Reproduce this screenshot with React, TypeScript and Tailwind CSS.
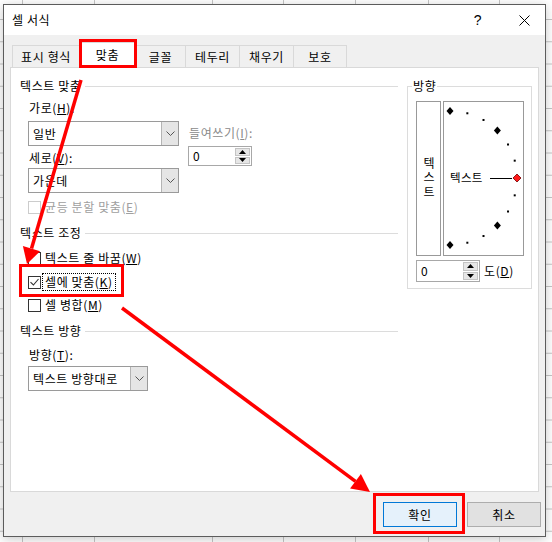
import React from "react";

const U = ({ children }: { children: React.ReactNode }) => (
  <span className="underline underline-offset-[1px]">{children}</span>
);

function GridBackground() {
  const cols = [22.5, 94.5, 212.5, 283.5, 355.5, 428.5, 499.5];
  const rows = Array.from({ length: 25 }, (_, i) => 19.5 + i * 22.25);
  return (
    <svg className="absolute inset-0" width="552" height="542">
      {cols.map((x) => (
        <line key={x} x1={x} y1="0" x2={x} y2="542" stroke="#c6c6c6" strokeWidth="1" />
      ))}
      {rows.map((y) => (
        <line key={y} x1="0" y1={y} x2="552" y2={y} stroke="#c6c6c6" strokeWidth="1" />
      ))}
    </svg>
  );
}

function Chevron() {
  return (
    <svg width="9" height="5" viewBox="0 0 9 5">
      <polyline points="0.5,0.5 4.5,4.5 8.5,0.5" fill="none" stroke="#555" strokeWidth="1" />
    </svg>
  );
}

function Select({ value, className }: { value: string; className: string }) {
  return (
    <div className={`flex h-[25px] border border-[#9a9a9a] bg-white ${className}`}>
      <span className="flex-1 pl-[4px] flex items-center leading-[16px]">{value}</span>
      <div className="w-[17px] bg-[#e5e5e5] border-l border-[#b4b4b4] flex items-center justify-center">
        <Chevron />
      </div>
    </div>
  );
}

function Tri({ down }: { down?: boolean }) {
  return (
    <svg width="7" height="4" viewBox="0 0 7 4">
      {down ? <polygon points="0,0 7,0 3.5,4" fill="#000" /> : <polygon points="0,4 7,4 3.5,0" fill="#000" />}
    </svg>
  );
}

function Spin({ className }: { className: string }) {
  return (
    <div className={`flex w-[64px] border border-[#a8a8a8] bg-white ${className}`}>
      <span className="flex-1 pl-[4px] flex items-center leading-[16px]">0</span>
      <div className="w-[15px] my-px mr-px flex flex-col gap-px">
        <div className="flex-1 bg-[#e6e6e6] border border-[#c4c4c4] flex items-center justify-center">
          <Tri />
        </div>
        <div className="flex-1 bg-[#e6e6e6] border border-[#c4c4c4] flex items-center justify-center">
          <Tri down />
        </div>
      </div>
    </div>
  );
}

function Check({ checked, disabled }: { checked?: boolean; disabled?: boolean }) {
  return (
    <span
      className={`w-[13px] h-[13px] shrink-0 border bg-white flex items-center justify-center ${
        disabled ? "border-[#cccccc]" : "border-[#333333]"
      }`}
    >
      {checked && (
        <svg width="9" height="8" viewBox="0 0 9 8">
          <path d="M0.5 4.2 L3.4 7 L8.5 1" fill="none" stroke="#333" strokeWidth="1.1" />
        </svg>
      )}
    </span>
  );
}

function GroupHeader({ children }: { children: React.ReactNode }) {
  return (
    <div className="flex items-center h-[16px]">
      <span className="leading-[16px]">{children}</span>
      <div className="flex-1 h-px bg-[#dcdcdc] ml-[3px]" />
    </div>
  );
}

function Tabs() {
  const tab = "mt-[3px] h-[22px] -ml-px border border-b-0 border-[#d9d9d9] bg-[#f0f0f0] flex items-center justify-center leading-[16px]";
  return (
    <div className="flex items-start h-[25px] ml-[2px]">
      <div className="mt-[3px] h-[22px] w-[68px] border border-b-0 border-[#d9d9d9] bg-[#f0f0f0] flex items-center justify-center leading-[16px]">
        표시 형식
      </div>
      <div className="relative z-10 h-[26px] w-[57px] -ml-px border border-b-0 border-[#d9d9d9] bg-white flex items-center justify-center leading-[16px] pb-[1px]">
        맞춤
      </div>
      <div className={`${tab} w-[51px]`}>글꼴</div>
      <div className={`${tab} w-[55px]`}>테두리</div>
      <div className={`${tab} w-[55px]`}>채우기</div>
      <div className={`${tab} w-[54px]`}>보호</div>
    </div>
  );
}

function Orientation() {
  const r = 67;
  const cx = 6;
  const cy = 76;
  const pts = [90, 75, 60, 45, 30, 15, 0, -15, -30, -45, -60, -75, -90].map((a) => ({
    a,
    x: cx + r * Math.cos((a * Math.PI) / 180),
    y: cy - r * Math.sin((a * Math.PI) / 180),
  }));
  return (
    <div className="relative w-[81px] h-[155px] border border-[#999999]">
      <svg className="absolute inset-0" width="79" height="153">
        {pts.map((p) => {
          if (p.a === 0)
            return (
              <polygon
                key={p.a}
                points={`${p.x},${p.y - 4} ${p.x + 4},${p.y} ${p.x},${p.y + 4} ${p.x - 4},${p.y}`}
                fill="#ff1a1a"
                stroke="#700000"
                strokeWidth="0.8"
              />
            );
          if (Math.abs(p.a) === 90 || Math.abs(p.a) === 45)
            return (
              <polygon
                key={p.a}
                points={`${p.x},${p.y - 4} ${p.x + 3.5},${p.y} ${p.x},${p.y + 4} ${p.x - 3.5},${p.y}`}
                fill="#000"
              />
            );
          return <rect key={p.a} x={p.x - 1} y={p.y - 1} width="2" height="2" fill="#000" />;
        })}
        <line x1="46" y1="76.5" x2="68" y2="76.5" stroke="#000" strokeWidth="1" />
      </svg>
      <span className="absolute left-[6px] top-[67px] leading-[16px] text-[11.5px] tracking-[0.3px]">텍스트</span>
    </div>
  );
}

function Panel() {
  return (
    <div className="w-[529px] h-[425px] border border-[#d9d9d9] bg-white flex items-start pt-[10px] pl-[9px]">
      {/* left column */}
      <div className="w-[378px] flex flex-col">
        <GroupHeader>텍스트 맞춤</GroupHeader>
        <div className="flex pl-[8px] mt-[6px]">
          <div className="w-[151px] flex flex-col">
            <span className="h-[16px] leading-[16px] pl-[1px]">
              가로(<U>H</U>):
            </span>
            <Select value="일반" className="mt-[5px] w-[151px]" />
            <span className="mt-[4px] h-[16px] leading-[16px] pl-[1px]">
              세로(<U>V</U>):
            </span>
            <Select value="가운데" className="mt-[2px] w-[151px]" />
          </div>
          <div className="ml-[9px] flex flex-col">
            <span className="mt-[25px] h-[16px] leading-[16px] pl-[1px] text-[#8a8a8a]">
              들여쓰기(<U>I</U>):
            </span>
            <Spin className="mt-[5px] h-[20px]" />
          </div>
        </div>
        <div className="mt-[6px] pl-[8px] flex items-center h-[16px] gap-[4px] text-[#a0a0a0]">
          <Check disabled />
          <span className="leading-[16px]">
            균등 분할 맞춤(<U>E</U>)
          </span>
        </div>
        <div className="mt-[10px]">
          <GroupHeader>텍스트 조정</GroupHeader>
        </div>
        <div className="mt-[9px] pl-[8px] flex items-center h-[16px] gap-[4px]">
          <Check />
          <span className="leading-[16px]">
            텍스트 줄 바꿈(<U>W</U>)
          </span>
        </div>
        <div className="mt-[7px] pl-[8px] flex items-center h-[18px] gap-[1px]">
          <Check checked />
          <span className="h-[18px] flex items-center border border-dotted border-black px-[2px] leading-[16px]">
            셀에 맞춤(<U>K</U>)
          </span>
        </div>
        <div className="mt-[6px] pl-[8px] flex items-center h-[16px] gap-[4px]">
          <Check />
          <span className="leading-[16px]">
            셀 병합(<U>M</U>)
          </span>
        </div>
        <div className="mt-[10px]">
          <GroupHeader>텍스트 방향</GroupHeader>
        </div>
        <span className="mt-[8px] ml-[9px] h-[16px] leading-[16px]">
          방향(<U>T</U>):
        </span>
        <div className="pl-[8px] mt-[3px]">
          <Select value="텍스트 방향대로" className="w-[120px]" />
        </div>
      </div>

      {/* right column: 방향 */}
      <div className="relative ml-[9px] mt-[8px] w-[125px] h-[203px] border border-[#dcdcdc] pt-[14px] pl-[8px]">
        <span className="absolute left-[4px] top-[-9px] bg-white px-[1px] leading-[16px]">방향</span>
        <div className="flex gap-[2px]">
          <div className="w-[25px] h-[155px] border border-[#999999] flex items-center justify-center">
            <span className="[writing-mode:vertical-rl] [text-orientation:upright] tracking-[2.5px] leading-[16px]">
              텍스트
            </span>
          </div>
          <Orientation />
        </div>
        <div className="mt-[4px] flex items-center gap-[4px]">
          <Spin className="h-[22px]" />
          <span className="leading-[16px]">
            도(<U>D</U>)
          </span>
        </div>
      </div>
    </div>
  );
}

export default function App() {
  return (
    <div className="relative w-[552px] h-[542px] overflow-hidden bg-white [font-family:'Noto_Sans_CJK_KR','Noto_Sans',sans-serif] text-[12px] tracking-[0.6px] text-black">
      <GridBackground />

      <div className="absolute left-[3px] top-[4px] w-[543px] h-[533px] border border-[#5c5c5c] bg-[#f0f0f0] flex flex-col shadow-[0_2px_10px_rgba(0,0,0,0.22)]">
        {/* title bar */}
        <div className="h-[30px] shrink-0 bg-white flex items-center">
          <span className="pl-[8px] leading-[16px]">셀 서식</span>
          <div className="ml-auto flex h-full">
            <div className="w-[50px] flex items-center justify-center text-[14px] [font-family:'Liberation_Sans',sans-serif]">
              ?
            </div>
            <div className="w-[42px] flex items-center justify-center">
              <svg width="11" height="11" viewBox="0 0 11 11">
                <path d="M0.5 0.5 L10.5 10.5 M10.5 0.5 L0.5 10.5" stroke="#000" strokeWidth="1" />
              </svg>
            </div>
          </div>
        </div>

        {/* body */}
        <div className="flex-1 pt-[7px] pl-[6px] flex flex-col">
          <Tabs />
          <Panel />
          <div className="mt-[10px] flex justify-end gap-[10px] pr-[4px]">
            <button className="w-[74px] h-[25px] border border-[#0078d7] bg-[#e5f1fb] leading-[16px]">확인</button>
            <button className="w-[74px] h-[25px] border border-[#adadad] bg-[#e1e1e1] leading-[16px]">취소</button>
          </div>
        </div>
      </div>

      {/* annotations */}
      <div className="absolute left-[79px] top-[39px] w-[58px] h-[29px] border-[3px] border-[#ff0000] z-20" />
      <div className="absolute left-[19px] top-[264px] w-[105px] h-[33px] border-[3px] border-[#ff0000] z-20" />
      <div className="absolute left-[373px] top-[493px] w-[92px] h-[41px] border-[3px] border-[#ff0000] z-20" />
      <svg className="absolute inset-0 z-20 pointer-events-none" width="552" height="542">
        <line x1="81" y1="80" x2="31.5" y2="248.6" stroke="#ff0000" strokeWidth="3.5" />
        <polygon points="27,264 40.1,251.2 22.9,246.1" fill="#ff0000" />
        <line x1="122" y1="308" x2="355.5" y2="481.3" stroke="#ff0000" strokeWidth="3.5" />
        <polygon points="370,492 350.1,488.5 360.9,474.1" fill="#ff0000" />
      </svg>
    </div>
  );
}
